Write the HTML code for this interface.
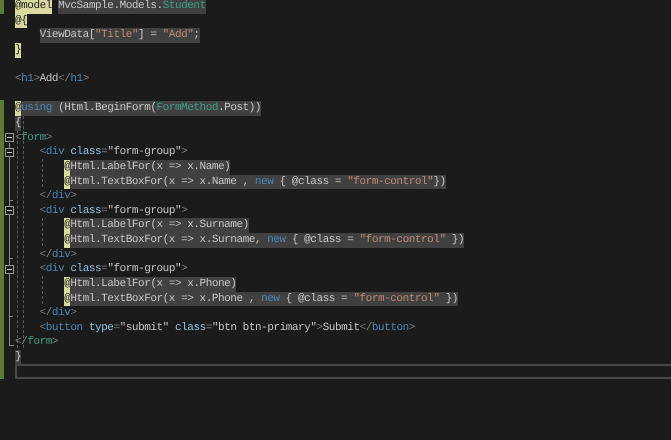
<!DOCTYPE html>
<html><head><meta charset="utf-8">
<style>
html,body{margin:0;padding:0;background:#1b1b1b;width:671px;height:440px;overflow:hidden}
#w{position:relative;width:671px;height:440px;overflow:hidden;font-family:"Liberation Mono",monospace;font-size:11px;letter-spacing:-.45px;color:#c8c8c8;text-rendering:geometricPrecision;filter:blur(.3px)}
.l{position:absolute;left:15px;height:14.63px;line-height:14.63px;white-space:pre;margin-top:1.3px}
.s{position:absolute}
.g{background:#404040;display:inline-block;height:14.63px;vertical-align:top}
.y{background:#d9d9a0;color:#222;display:inline-block;height:14.63px;vertical-align:top}
.b{color:#808080}.t{color:#4a86b8}.a{color:#8fc4e6}.e{color:#3f9c8a}.r{color:#c08a74}.k{color:#4a86b8}
</style></head><body><div id="w">
<div class="s" style="left:0;top:0;width:4px;height:14px;background:#5a7a35"></div>
<div class="s" style="left:0;top:100px;width:4px;height:279px;background:#5a7a35"></div>

<!-- current line -->
<div class="s" style="left:15px;top:364px;width:656px;height:2px;background:#484848"></div>
<div class="s" style="left:15px;top:377px;width:656px;height:2px;background:#484848"></div>
<div class="s" style="left:15px;top:364px;width:2px;height:15px;background:#484848"></div>

<!-- fold lines -->
<div class="s" style="left:9px;top:143px;width:1px;height:203px;background:#8a8a8a"></div>
<div class="s" style="left:9px;top:345px;width:5px;height:1px;background:#8a8a8a"></div>
<div class="s" style="left:9px;top:200px;width:4px;height:1px;background:#8a8a8a"></div>
<div class="s" style="left:9px;top:258px;width:4px;height:1px;background:#8a8a8a"></div>
<div class="s" style="left:9px;top:316px;width:4px;height:1px;background:#8a8a8a"></div>
<div class="s" style="left:5px;top:133px;width:7px;height:7px;border:1px solid #9a9a9a;background:#1b1b1b"><div style="position:absolute;left:1px;top:3px;width:5px;height:1px;background:#ccc"></div></div>
<div class="s" style="left:5px;top:148px;width:7px;height:7px;border:1px solid #9a9a9a;background:#1b1b1b"><div style="position:absolute;left:1px;top:3px;width:5px;height:1px;background:#ccc"></div></div>
<div class="s" style="left:5px;top:206px;width:7px;height:7px;border:1px solid #9a9a9a;background:#1b1b1b"><div style="position:absolute;left:1px;top:3px;width:5px;height:1px;background:#ccc"></div></div>
<div class="s" style="left:5px;top:265px;width:7px;height:7px;border:1px solid #9a9a9a;background:#1b1b1b"><div style="position:absolute;left:1px;top:3px;width:5px;height:1px;background:#ccc"></div></div>

<!-- indent guides -->
<div class="s" style="left:17px;top:116px;width:0;height:232px;border-left:1px dashed #5a5a5a"></div>
<div class="s" style="left:23px;top:116px;width:0;height:232px;border-left:1px dashed #5a5a5a"></div>
<div class="s" style="left:42px;top:159px;width:0;height:28px;border-left:1px dashed #5a5a5a"></div>
<div class="s" style="left:42px;top:218px;width:0;height:28px;border-left:1px dashed #5a5a5a"></div>
<div class="s" style="left:42px;top:276px;width:0;height:28px;border-left:1px dashed #5a5a5a"></div>

<div class="l" style="top:-2.3px"><span class="y">@model</span> <span class="g">MvcSample.Models.<span class="e">Student</span></span></div>
<div class="l" style="top:12.33px"><span class="y">@{</span></div>
<div class="l" style="top:26.96px">    <span class="g">ViewData[<span class="r">"Title"</span>] = <span class="r">"Add"</span>;</span></div>
<div class="l" style="top:41.59px"><span class="y">}</span></div>
<div class="l" style="top:70.85px"><span class="b">&lt;</span><span class="t">h1</span><span class="b">&gt;</span>Add<span class="b">&lt;/</span><span class="t">h1</span><span class="b">&gt;</span></div>
<div class="l" style="top:100.11px"><span class="y">@</span><span class="g"><span class="k">using</span> (Html.BeginForm(<span class="e">FormMethod</span>.Post))</span></div>
<div class="l" style="top:114.74px"><span class="g">{</span></div>
<div class="l" style="top:129.37px"><span class="b">&lt;</span><span class="e">form</span><span class="b">&gt;</span></div>
<div class="l" style="top:144px">    <span class="b">&lt;</span><span class="t">div</span> <span class="a">class</span><span class="b">=</span>"form-group"<span class="b">&gt;</span></div>
<div class="l" style="top:158.63px">        <span class="y">@</span><span class="g">Html.LabelFor(x =&gt; x.Name)</span></div>
<div class="l" style="top:173.26px">        <span class="y">@</span><span class="g">Html.TextBoxFor(x =&gt; x.Name , <span class="k">new</span> { @class = <span class="r">"form-control"</span>})</span></div>
<div class="l" style="top:187.89px">    <span class="b">&lt;/</span><span class="t">div</span><span class="b">&gt;</span></div>
<div class="l" style="top:202.52px">    <span class="b">&lt;</span><span class="t">div</span> <span class="a">class</span><span class="b">=</span>"form-group"<span class="b">&gt;</span></div>
<div class="l" style="top:217.15px">        <span class="y">@</span><span class="g">Html.LabelFor(x =&gt; x.Surname)</span></div>
<div class="l" style="top:231.78px">        <span class="y">@</span><span class="g">Html.TextBoxFor(x =&gt; x.Surname, <span class="k">new</span> { @class = <span class="r">"form-control"</span> })</span></div>
<div class="l" style="top:246.41px">    <span class="b">&lt;/</span><span class="t">div</span><span class="b">&gt;</span></div>
<div class="l" style="top:261.04px">    <span class="b">&lt;</span><span class="t">div</span> <span class="a">class</span><span class="b">=</span>"form-group"<span class="b">&gt;</span></div>
<div class="l" style="top:275.67px">        <span class="y">@</span><span class="g">Html.LabelFor(x =&gt; x.Phone)</span></div>
<div class="l" style="top:290.3px">        <span class="y">@</span><span class="g">Html.TextBoxFor(x =&gt; x.Phone , <span class="k">new</span> { @class = <span class="r">"form-control"</span> })</span></div>
<div class="l" style="top:304.93px">    <span class="b">&lt;/</span><span class="t">div</span><span class="b">&gt;</span></div>
<div class="l" style="top:319.56px">    <span class="b">&lt;</span><span class="t">button</span> <span class="a">type</span><span class="b">=</span>"submit" <span class="a">class</span><span class="b">=</span>"btn btn-primary"<span class="b">&gt;</span>Submit<span class="b">&lt;/</span><span class="t">button</span><span class="b">&gt;</span></div>
<div class="l" style="top:334.19px"><span class="b">&lt;/</span><span class="e">form</span><span class="b">&gt;</span></div>
<div class="l" style="top:348.82px"><span class="g">}</span></div>
</div></body></html>
